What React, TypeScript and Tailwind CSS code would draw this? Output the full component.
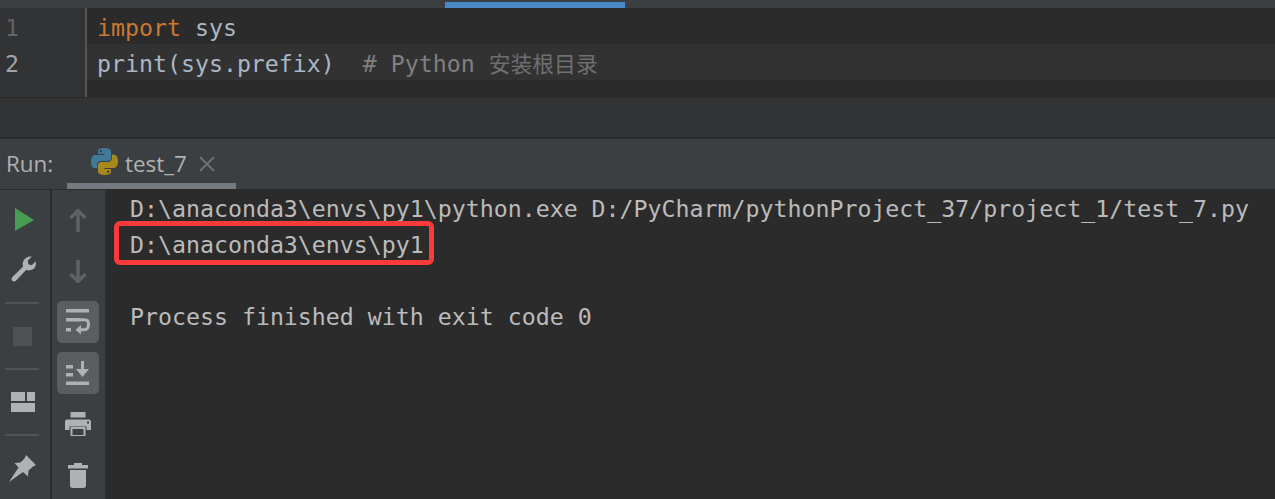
const mono = "font-['DejaVu_Sans_Mono','Liberation_Mono','Noto_Sans_CJK_SC',monospace]";

function PythonLogo() {
    const snake = "M54.9 0C26.8 0 28.6 12.2 28.6 12.2l0 12.6h26.8v3.8H17.9S0 26.6 0 54.9c0 28.3 15.6 27.3 15.6 27.3h9.3V69s-.5-15.6 15.4-15.6h26.6s14.9.2 14.9-14.4V14.9S84.1 0 54.9 0zM40.2 8.5a4.8 4.8 0 110 9.6 4.8 4.8 0 010-9.6z";
    return (
        <svg viewBox="0 0 110 110" className="w-[27px] h-[27px] shrink-0">
            <path d={snake} fill="#3f7a99" fillRule="evenodd" />
            <path d={snake} fill="#a68a1e" fillRule="evenodd" transform="rotate(180 55 55)" />
        </svg>
    );
}

function Separator() {
    return <div className="h-[2px] w-[34px] bg-[#515355]" />;
}

function LeftCell({ children }: { children: React.ReactNode }) {
    return <div className="h-[50px] flex items-center justify-center">{children}</div>;
}

function RightCell({ active, children }: { active?: boolean; children: React.ReactNode }) {
    return (
        <div className={`w-[42px] h-[42px] rounded-[5px] flex items-center justify-center ${active ? "bg-[#5a5e60]" : ""}`}>
            {children}
        </div>
    );
}

function LeftToolbar() {
    return (
        <div className="w-[50px] bg-[#3c3f41] flex flex-col items-center pt-[4px] pr-[6px] shrink-0">
            <LeftCell>
                <svg viewBox="0 0 19 23" className="w-[19px] h-[23px] ml-[5px]">
                    <path d="M0 0L19 12L0 23Z" fill="#499c54" />
                </svg>
            </LeftCell>
            <LeftCell>
                <svg viewBox="0 0 28 28" className="w-[27px] h-[27px] ml-[2px]">
                    <path d="M26.5 5.5c1 3.6-.2 7-3.4 8.6-2.2 1.1-4.4 1-6.2.2L6.2 25.6c-1.200 1.200-2.800 1-3.800 0s-1.100-2.700.1-3.900L13.600 11c-.8-2-.6-4.400.5-6.300C15.700 1.800 19-.1 22.600.6l-4.200 4.300.6 3.700 3.700.9z" fill="#afb1b3" />
                </svg>
            </LeftCell>
            <div className="mt-[8px]"><Separator /></div>
            <div className="mt-[7px]">
                <LeftCell><div className="w-[19px] h-[19px] bg-[#4f5052]" /></LeftCell>
            </div>
            <div className="mt-[7px]"><Separator /></div>
            <div className="mt-[7px]">
                <LeftCell>
                    <svg viewBox="0 0 24 20" className="w-[24px] h-[20px] ml-[1px]">
                        <path d="M0 0H14V9H0ZM16 0H24V9H16ZM0 11H24V20H0Z" fill="#afb1b3" />
                    </svg>
                </LeftCell>
            </div>
            <div className="mt-[7px]"><Separator /></div>
            <div className="mt-[7px]">
                <LeftCell>
                    <svg viewBox="0 0 27 27" className="w-[27px] h-[27px] ml-[1px]">
                        <path d="M17 0L27 10L24 11.500L19.500 15.500L19 21.500L14 17L0 27L9.500 12.500L5.500 8L11.500 7.500L15.500 3.500Z" fill="#afb1b3" />
                    </svg>
                </LeftCell>
            </div>
        </div>
    );
}

function RightToolbar() {
    return (
        <div className="w-[54px] bg-[#3c3f41] border-r border-[#323232] flex flex-col items-center gap-[9px] pt-[9px] pr-[2px] shrink-0">
            <RightCell>
                <svg viewBox="0 0 18 23" className="w-[18px] h-[23px]">
                    <path d="M9 1.500V23M1.500 9L9 1.500L16.500 9" fill="none" stroke="#5f6265" strokeWidth="3.500" />
                </svg>
            </RightCell>
            <RightCell>
                <svg viewBox="0 0 18 23" className="w-[18px] h-[23px]">
                    <path d="M9 0V21.500M1.500 14L9 21.500L16.500 14" fill="none" stroke="#5f6265" strokeWidth="3.500" />
                </svg>
            </RightCell>
            <RightCell active>
                <svg viewBox="0 0 24 26" className="w-[24px] h-[26px]">
                    <path d="M0 0H23V3.500H0ZM0 9H14V12.500H0ZM0 19H5V22.500H0Z" fill="#afb1b3" />
                    <path d="M14 10.700H18.500C21.500 10.700 22.500 13 22.500 15.500C22.500 18 21 20.700 18.500 20.700H14" fill="none" stroke="#afb1b3" strokeWidth="3" />
                    <path d="M9.500 20.700L15 16V25.500Z" fill="#afb1b3" />
                </svg>
            </RightCell>
            <RightCell active>
                <svg viewBox="0 0 24 24" className="w-[24px] h-[24px]">
                    <path d="M0 4H7V7.500H0ZM0 12H7V15.500H0ZM0 20.500H23V24H0Z" fill="#afb1b3" />
                    <path d="M15 0H18V8H23L16.500 16L10 8H15Z" fill="#afb1b3" />
                </svg>
            </RightCell>
            <RightCell>
                <svg viewBox="0 0 26 24" className="w-[26px] h-[24px]">
                    <path d="M5.500 0H20.500V5.500H5.500Z" fill="#afb1b3" />
                    <path d="M2 7.500H24C25 7.500 26 8.500 26 9.500V18H21.500V14.500H4.500V18H0V9.500C0 8.500 1 7.500 2 7.500Z" fill="#afb1b3" />
                    <path d="M6.500 16H19.500V24H6.500Z" fill="none" stroke="#afb1b3" strokeWidth="2" />
                    <rect x="22" y="9.500" width="2" height="2" fill="#3c3f41" />
                </svg>
            </RightCell>
            <RightCell>
                <svg viewBox="0 0 20 25" className="w-[20px] h-[25px]">
                    <path d="M6 0H14V2H20V5.500H0V2H6Z" fill="#afb1b3" />
                    <path d="M2 7H18V22.500C18 24 17 25 15.500 25H4.500C3 25 2 24 2 22.500Z" fill="#afb1b3" />
                </svg>
            </RightCell>
        </div>
    );
}

export default function App() {
    return (
        <div className={`w-[1275px] h-[499px] overflow-hidden flex flex-col bg-[#2b2b2b] text-[23.24px] ${mono}`}>
            <div className="h-[8px] bg-[#3c3f41] pt-[2px] pl-[445px] shrink-0">
                <div className="w-[180px] h-[6px] bg-[#4a88c7]" />
            </div>

            <div className="h-[89px] flex shrink-0 leading-[40px]">
                <div className="w-[85px] bg-[#313335] text-[#606366] pl-[5px] shrink-0">
                    <div className="h-[36px]">1</div>
                    <div className="h-[36px] text-[#a4a3a3]">2</div>
                </div>
                <div className="w-[2px] bg-[#555555] shrink-0" />
                <div className="flex-1">
                    <div className="h-[36px] pl-[10px] whitespace-pre text-[#a9b7c6]">
                        <span className="text-[#cc7832]">import</span> sys
                    </div>
                    <div className="h-[36px] pl-[10px] whitespace-pre text-[#a9b7c6] bg-[#323232]">
                        print(sys.prefix)  <span className="text-[#808080]"># Python <span className="text-[21.8px] text-[#6f6f6f]">安装根目录</span></span>
                    </div>
                </div>
            </div>

            <div className="h-[42px] bg-[#313335] border-t border-[#2b2b2b] border-b-2 shrink-0" />

            <div className="h-[50px] bg-[#3c3f41] flex shrink-0 font-['Open_Sans','Noto_Sans',sans-serif] text-[22.4px] text-[#afb1b3]">
                <div className="w-[67px] pl-[6px] pt-[8px] leading-[34px] shrink-0">Run:</div>
                <div className="w-[169px] h-[50px] border-b-[6px] border-[#747a80] flex items-start pt-[9px] pl-[24px] gap-[7px]">
                    <PythonLogo />
                    <span className="leading-[34px] -mt-[1px]">test_7</span>
                    <svg viewBox="0 0 16 16" className="w-[16px] h-[16px] ml-[5px] mt-[8px]">
                        <path d="M1 1L15 15M15 1L1 15" stroke="#6e7072" strokeWidth="2" />
                    </svg>
                </div>
            </div>

            <div className="flex-1 flex min-h-0 border-t border-[#2b2b2b]">
                <LeftToolbar />
                <div className="w-[2px] bg-[#2b2b2b] shrink-0" />
                <RightToolbar />
                <div className="relative flex-1 pl-[24px] pt-[1px] leading-[36px] text-[#bbbbbb] whitespace-pre">
                    <div>D:\anaconda3\envs\py1\python.exe D:/PyCharm/pythonProject_37/project_1/test_7.py</div>
                    <div>D:\anaconda3\envs\py1</div>
                    <div className="h-[36px]" />
                    <div>Process finished with exit code 0</div>
                    <div className="absolute left-[8px] top-[31px] w-[320px] h-[44px] border-[5px] border-[#fb3b3b] rounded-[6px]" />
                </div>
            </div>
        </div>
    );
}
